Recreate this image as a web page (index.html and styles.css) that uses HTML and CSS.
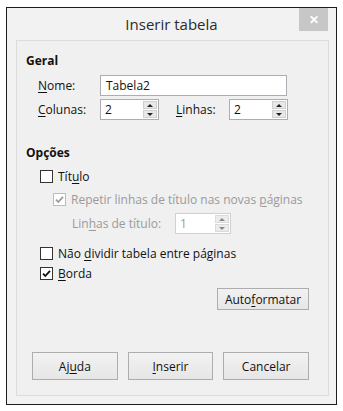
FILE: index.html
```html
<!DOCTYPE html>
<html lang="pt">
<head>
<meta charset="utf-8">
<title>Inserir tabela</title>
<link rel="stylesheet" href="styles.css">
</head>
<body>
<div class="window">
  <div class="titlebar">
    <span></span>
    <span class="title">Inserir tabela</span>
    <span class="close-wrap"><span class="close">&#x2715;</span></span>
  </div>
  <div class="panel">
    <div class="section-title">Geral</div>
    <div class="row row-name">
      <span class="label label-geral"><u>N</u>ome:</span>
      <span class="input input-name">Tabela2</span>
    </div>
    <div class="row row-cols">
      <span class="label label-geral"><u>C</u>olunas:</span>
      <span class="spin spin-cols"><span class="spin-value">2</span><span class="spin-btns"><span class="spin-btn"><span class="tri-up"></span></span><span class="spin-btn"><span class="tri-down"></span></span></span></span>
      <span class="label label-linhas"><u>L</u>inhas:</span>
      <span class="spin spin-rows"><span class="spin-value">2</span><span class="spin-btns"><span class="spin-btn"><span class="tri-up"></span></span><span class="spin-btn"><span class="tri-down"></span></span></span></span>
    </div>

    <div class="section-title section-opcoes">Opções</div>
    <div class="row check-row row-titulo">
      <span class="checkbox"></span>
      <span class="check-label">Tít<u>u</u>lo</span>
    </div>
    <div class="row check-row row-repetir disabled">
      <span class="checkbox checked"><svg viewBox="0 0 11 11" width="11" height="11"><path d="M2 5.6 L4.3 8 L9 2.8" fill="none" stroke="currentColor" stroke-width="1.8"/></svg></span>
      <span class="check-label">Repetir linhas de título nas novas <u>p</u>áginas</span>
    </div>
    <div class="row row-linhas-titulo disabled">
      <span class="label label-lt">Lin<u>h</u>as de título:</span>
      <span class="spin spin-lt"><span class="spin-value">1</span><span class="spin-btns"><span class="spin-btn"><span class="tri-up"></span></span><span class="spin-btn"><span class="tri-down"></span></span></span></span>
    </div>
    <div class="row check-row row-dividir">
      <span class="checkbox"></span>
      <span class="check-label">Não <u>d</u>ividir tabela entre páginas</span>
    </div>
    <div class="row check-row row-borda">
      <span class="checkbox checked"><svg viewBox="0 0 11 11" width="11" height="11"><path d="M2 5.6 L4.3 8 L9 2.8" fill="none" stroke="currentColor" stroke-width="1.8"/></svg></span>
      <span class="check-label"><u>B</u>orda</span>
    </div>
    <div class="row row-auto">
      <span class="button button-auto">Auto<u>f</u>ormatar</span>
    </div>
    <div class="footer">
      <span class="button button-foot">Aj<u>u</u>da</span>
      <span class="button button-foot"><u>I</u>nserir</span>
      <span class="button button-foot">Cancelar</span>
    </div>
  </div>
</div>
</body>
</html>
```
FILE: styles.css
```css
html, body {
  margin: 0;
  padding: 0;
  background: #ffffff;
}
body {
  font-family: "Open Sans", "Noto Sans", sans-serif;
  font-size: 12px;
  color: #111;
}
u { text-decoration: underline; text-underline-offset: 2px; }

.window {
  box-sizing: border-box;
  margin: 7px 0 0 6px;
  width: 331px;
  height: 398px;
  border: 1px solid #1c1c1c;
  background: #f2f2f2;
  display: flex;
  flex-direction: column;
}
.titlebar {
  height: 32px;
  display: grid;
  grid-template-columns: 1fr auto 1fr;
  align-items: start;
}
.title {
  font-size: 15px;
  color: #2b2b2b;
  line-height: 32px;
}
.close-wrap {
  display: flex;
  justify-content: flex-end;
  padding-right: 8px;
}
.close {
  width: 29px;
  height: 23px;
  background: #c7c7c7;
  color: #fff;
  font-size: 12px;
  font-weight: bold;
  display: flex;
  align-items: center;
  justify-content: center;
}

.panel {
  flex: 1;
  margin: 0 7px 8px 9px;
  border: 1px solid #dcdcdc;
  background: #f0f0f0;
  padding: 0 19px 0 9px;
  display: flex;
  flex-direction: column;
}
.section-title {
  font-weight: bold;
  height: 20px;
  line-height: 20px;
  margin-top: 10px;
}
.section-opcoes { margin-top: 23px; }

.row {
  display: flex;
  align-items: center;
}
.row-name { height: 21px; margin-top: 4px; padding-left: 12px; }
.row-cols { height: 21px; margin-top: 3px; padding-left: 12px; }
.label-geral { width: 62px; }
.label-linhas { width: 53px; margin-left: 17px; }

.input {
  box-sizing: border-box;
  height: 21px;
  border: 1px solid #abadb3;
  background: #fff;
  padding-left: 5px;
  line-height: 19px;
}
.input-name { width: 187px; }

.spin {
  box-sizing: border-box;
  height: 21px;
  border: 1px solid #abadb3;
  background: #fff;
  display: flex;
  align-items: stretch;
  justify-content: space-between;
}
.spin-cols, .spin-rows { width: 59px; }
.spin-value { padding-left: 4px; line-height: 19px; }
.spin-btns {
  width: 14px;
  display: flex;
  flex-direction: column;
  padding: 1px 1px 1px 0;
  gap: 1px;
}
.spin-btn {
  flex: 1;
  background: #e8e8e8;
  border: 1px solid #cfcfcf;
  display: flex;
  align-items: center;
  justify-content: center;
}
.tri-up {
  width: 0; height: 0;
  border-left: 3px solid transparent;
  border-right: 3px solid transparent;
  border-bottom: 3px solid #222;
}
.tri-down {
  width: 0; height: 0;
  border-left: 3px solid transparent;
  border-right: 3px solid transparent;
  border-top: 3px solid #222;
}

.check-row { height: 20px; padding-left: 14px; }
.row-titulo { margin-top: 3px; }
.row-repetir { margin-top: 3px; padding-left: 27px; }
.row-dividir { margin-top: 9px; }
.checkbox {
  box-sizing: border-box;
  width: 13px;
  height: 13px;
  border: 1px solid #333;
  background: #fff;
  display: flex;
  align-items: center;
  justify-content: center;
  color: #111;
}
.check-label { margin-left: 5px; }

.disabled { color: #9a9a9a; }
.disabled .checkbox { border-color: #bcbcbc; color: #9c9c9c; }
.disabled .spin { border-color: #d0d0d0; }
.disabled .spin-btn { background: #ececec; border-color: #dadada; }
.disabled .tri-up { border-bottom-color: #8a8a8a; }
.disabled .tri-down { border-top-color: #8a8a8a; }

.row-linhas-titulo { height: 21px; margin-top: 4px; padding-left: 46px; }
.label-lt { width: 103px; }
.spin-lt { width: 56px; }

.row-auto { justify-content: flex-end; margin-top: 5px; }
.button {
  box-sizing: border-box;
  border: 1px solid #adadad;
  background: linear-gradient(#f2f2f2, #e6e6e6);
  display: flex;
  align-items: center;
  justify-content: center;
  color: #111;
}
.button-auto { width: 92px; height: 22px; }

.footer {
  margin-top: 42px;
  display: flex;
  gap: 10px;
  padding-left: 6px;
}
.button-foot { width: 88px; height: 28px; }
```
